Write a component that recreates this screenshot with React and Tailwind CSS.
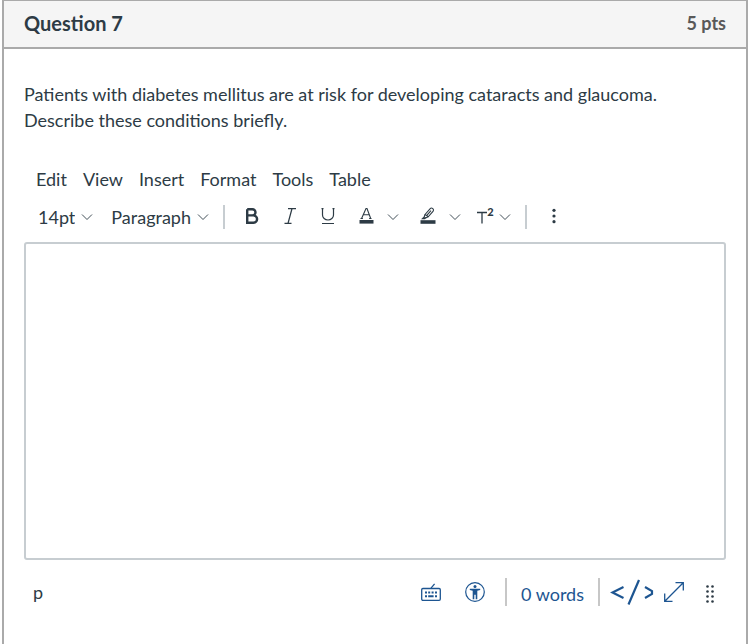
import { useState } from 'react';

const MENUS = ['Edit', 'View', 'Insert', 'Format', 'Tools', 'Table'];

function Chevron() {
  return (
    <svg width="12" height="8" viewBox="0 0 12 8" fill="none" stroke="currentColor" strokeWidth="0.9" className="shrink-0" aria-hidden="true">
      <path d="M1 1.5 6 6.5 11 1.5" />
    </svg>
  );
}

function Dropdown({ label, value, options, onChange }) {
  return (
    <div className="flex items-center gap-1.5">
      <select
        aria-label={label}
        value={value}
        onChange={(e) => onChange(e.target.value)}
        className="appearance-none bg-transparent py-1 leading-normal field-sizing-content cursor-pointer"
      >
        {options.map((o) => (
          <option key={o}>{o}</option>
        ))}
      </select>
      <Chevron />
    </div>
  );
}

function ToolButton({ label, className = 'w-[38px] pb-0.5', children }) {
  return (
    <button type="button" aria-label={label} className={`flex h-8 shrink-0 items-center justify-center ${className}`}>
      {children}
    </button>
  );
}

function Toolbar() {
  const [size, setSize] = useState('14pt');
  const [block, setBlock] = useState('Paragraph');

  return (
    <div className="flex h-12 items-center pl-3.5">
      <Dropdown label="Font size" value={size} options={['12pt', '14pt', '18pt', '24pt']} onChange={setSize} />
      <div className="ml-[18px] mr-3.5">
        <Dropdown label="Block" value={block} options={['Paragraph', 'Heading 2', 'Heading 3']} onChange={setBlock} />
      </div>
      <span className="mr-2 h-6 w-0.5 bg-[#c7cdd1]" />
      <ToolButton label="Bold">
        <svg width="14" height="18" viewBox="0 0 14 18" fill="none" stroke="currentColor" strokeWidth="2.4" aria-hidden="true">
          <path d="M2.2 2.2h5.2a3.1 3.1 0 0 1 0 6.2H2.2M7.5 8.4h.9a3.7 3.7 0 0 1 0 7.4H2.2V2.2" />
        </svg>
      </ToolButton>
      <ToolButton label="Italic">
        <svg width="14" height="18" viewBox="0 0 14 18" fill="none" stroke="currentColor" strokeWidth="1.3" aria-hidden="true">
          <path d="M5 1.7h8M1.5 16.3h7M9 1.7 5 16.3" />
        </svg>
      </ToolButton>
      <ToolButton label="Underline">
        <svg width="16" height="18" viewBox="0 0 16 18" fill="none" stroke="currentColor" strokeWidth="1.2" aria-hidden="true">
          <path d="M1.5 1.6h2M12.5 1.6h2M2.5 1.6v6.4a5.5 5 0 0 0 11 0V1.6M2 16.5h12" />
        </svg>
      </ToolButton>
      <ToolButton label="Text color">
        <svg width="16" height="18" viewBox="0 0 16 18" fill="none" stroke="currentColor" strokeWidth="1.1" aria-hidden="true">
          <path d="M2.5 11.5h2.4M11.1 11.5h2.4M3.7 11.3 8 1.5h1L12.6 11.3M5 7.8h6.2" />
          <path d="M1.5 13h14v3.6h-14z" fill="currentColor" stroke="none" />
        </svg>
      </ToolButton>
      <ToolButton label="Text color options" className="w-4">
        <Chevron />
      </ToolButton>
      <ToolButton label="Highlight" className="ml-2 w-[38px] pb-0.5">
        <svg width="18" height="18" viewBox="0 0 18 18" fill="none" stroke="currentColor" strokeWidth="1.1" aria-hidden="true">
          <path d="M6 7.5 11 1.8a1.9 1.9 0 0 1 3 2.6L9.2 9.8 6 7.5ZM6 7.5l-.8 2.3 1.3 1.2 2.7-1.2M5.2 9.8 3.4 11.6h2.4l.7-.6M8 8.2l4-4.6" />
          <path d="M1.5 13.2h15v3.6h-15z" fill="currentColor" stroke="none" />
        </svg>
      </ToolButton>
      <ToolButton label="Highlight options" className="w-4">
        <Chevron />
      </ToolButton>
      <ToolButton label="Superscript" className="ml-2.5 w-6 pb-0.5">
        <svg width="11" height="18" viewBox="0 0 11 18" fill="none" stroke="currentColor" strokeWidth="1.3" aria-hidden="true">
          <path d="M1 5.5h10M6 5.5v11" />
        </svg>
        <span className="mb-2 text-[11px] leading-4 font-black">2</span>
      </ToolButton>
      <ToolButton label="Superscript options" className="w-4">
        <Chevron />
      </ToolButton>
      <span className="ml-3 mr-2 h-6 w-0.5 bg-[#c7cdd1]" />
      <ToolButton label="More">
        <svg width="4" height="16" viewBox="0 0 4 16" fill="currentColor" aria-hidden="true">
          <circle cx="2" cy="2.3" r="1.6" />
          <circle cx="2" cy="8" r="1.6" />
          <circle cx="2" cy="13.7" r="1.6" />
        </svg>
      </ToolButton>
    </div>
  );
}

function KeyboardIcon() {
  return (
    <svg width="20" height="20" viewBox="0 0 20 20" fill="none" stroke="currentColor" strokeWidth="1.3" aria-hidden="true">
      <rect x="0.7" y="6.5" width="18.6" height="11.8" rx="1.2" />
      <path d="M10 6.2 13.6 1.8" />
      <path d="M4 10.5h2M7.2 10.5h2M10.6 10.5h2M14 10.5h2M4 14.2h2M7.2 14.2h5.4M14 14.2h2" strokeWidth="2" />
    </svg>
  );
}

function AccessibilityIcon() {
  return (
    <svg width="20" height="20" viewBox="0 0 20 20" fill="currentColor" aria-hidden="true">
      <circle cx="10" cy="10" r="9.3" fill="none" stroke="currentColor" strokeWidth="1.2" />
      <circle cx="10" cy="4.6" r="1.5" />
      <path d="M4.8 6.8h10.4v1.3L12.3 8.8v8.4h-1.6v-4.4H9.3v4.4H7.7V8.8l-2.9-.7z" />
    </svg>
  );
}

function StatusBar() {
  return (
    <div className="flex items-center justify-between pl-[9px] pt-4">
      <span>p</span>
      <div className="flex items-center text-[#1d5591]">
        <ToolButton label="Keyboard shortcuts" className="w-11">
          <KeyboardIcon />
        </ToolButton>
        <ToolButton label="Accessibility checker" className="w-11">
          <AccessibilityIcon />
        </ToolButton>
        <span className="ml-2 h-7 w-0.5 bg-[#c7c7c7]" />
        <button type="button" className="px-3.5 pt-1">0 words</button>
        <span className="h-7 w-0.5 bg-[#c7c7c7]" />
        <ToolButton label="HTML editor" className="ml-2.5 w-11">
          <svg width="44" height="26" viewBox="0 0 44 26" fill="none" stroke="currentColor" strokeWidth="2.2" aria-hidden="true">
            <path d="M13.5 8 2.5 13.5l11 5.5M29 1 18.5 25.5M35 8 42 12.1v2.8L35 19" />
          </svg>
        </ToolButton>
        <ToolButton label="Fullscreen" className="ml-2 w-6">
          <svg width="20" height="20" viewBox="0 0 20 20" fill="none" stroke="currentColor" strokeWidth="1.3" aria-hidden="true">
            <path d="M.8 19.2 19.2.8M11.5.7h7.8v7.8M.7 11.5v7.8h7.8" />
          </svg>
        </ToolButton>
        <ToolButton label="Resize editor" className="ml-4 mr-2 w-4 pt-1 text-[#2d3b45]">
          <svg width="8" height="18" viewBox="0 0 8 18" fill="currentColor" aria-hidden="true">
            {[1, 6, 11, 16].map((y) => (
              <g key={y}>
                <circle cx="1.5" cy={y + 0.5} r="1.3" />
                <circle cx="6.5" cy={y + 0.5} r="1.3" />
              </g>
            ))}
          </svg>
        </ToolButton>
      </div>
    </div>
  );
}

export default function App() {
  return (
    <div className="min-h-screen bg-white pl-0.5 pr-1 font-['Lato',sans-serif] text-[18px] leading-[26px] text-[#2d3b45]">
      <section className="min-h-screen border-x-2 border-t border-[#aaaaaa]">
        <header className="flex h-12 items-center justify-between border-b-2 border-[#aaaaaa] bg-[#f5f5f5] px-5 pb-0.5 font-bold">
          <h1 className="text-[20px]">Question 7</h1>
          <span className="text-[#595959]">5 pts</span>
        </header>

        <div className="px-5 pt-8">
          <p>
            Patients with diabetes mellitus are at risk for developing cataracts and glaucoma. Describe these conditions
            briefly.
          </p>

          <nav className="mt-8 flex h-7 items-center gap-4 pl-3">
            {MENUS.map((m) => (
              <button key={m} type="button">{m}</button>
            ))}
          </nav>
          <Toolbar />
          <textarea
            aria-label="Answer"
            className="mt-px block h-[318px] w-full resize-none rounded-[3px] border-2 border-[#c7cdd1] px-3 py-2 outline-none"
          />
          <StatusBar />
        </div>
      </section>
    </div>
  );
}
